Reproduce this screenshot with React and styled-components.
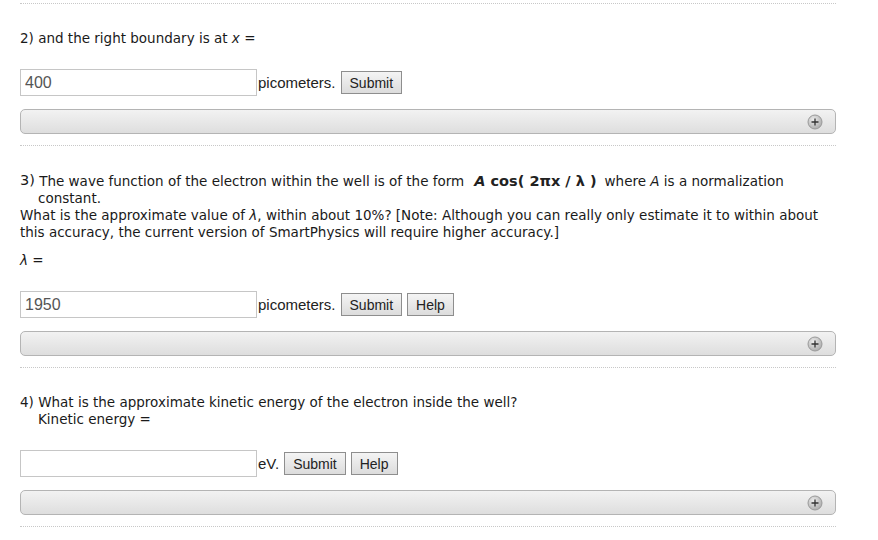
import React from 'react';
import styled, { createGlobalStyle } from 'styled-components';

const Global = createGlobalStyle`
  body {
    margin: 0;
    background: #ffffff;
    font-family: "DejaVu Sans", Verdana, sans-serif;
    color: #1a1a1a;
  }
`;

const Page = styled.div`
  padding: 0 42px 0 20px;
  width: 816px;
`;

const Rule = styled.div`
  border-top: 1px dotted #c8c8c8;
  height: 0;
  margin-top: ${(p) => p.top || 0}px;
`;

const Section = styled.div`
  padding-top: ${(p) => p.top || 26}px;
`;

const Prompt = styled.div`
  font-size: 13.5px;
  line-height: 17px;
`;

const Indent = styled.div`
  padding-left: 18px;
`;

const Num = styled.span`
  font-size: 14.5px;
  vertical-align: 1px;
`;

const Formula = styled.span`
  font-size: 14.5px;
  font-weight: bold;
  margin: 0 8px 0 10px;
  color: #222;
`;

const Var = styled.i`
  font-style: italic;
`;

const Spacer = styled.div`
  height: ${(p) => p.h}px;
`;

const AnswerRow = styled.div`
  display: flex;
  align-items: center;
  margin-top: ${(p) => p.top || 22}px;
  height: 27px;
  font-family: "Liberation Sans", Arial, sans-serif;
`;

const Field = styled.input`
  box-sizing: border-box;
  width: 237px;
  height: 27px;
  border: 1px solid #c6c6c6;
  padding: 0 4px;
  font-family: "Liberation Sans", Arial, sans-serif;
  font-size: 16px;
  color: #555;
  outline: none;
`;

const Unit = styled.span`
  font-size: 15px;
  color: #222;
  margin: 0 5px 0 1px;
`;

const Btn = styled.button`
  box-sizing: border-box;
  height: 23px;
  padding: 0 8px;
  margin-right: 5px;
  border: 1px solid #8e8e8e;
  border-radius: 0;
  background: linear-gradient(#f4f4f4, #dcdcdc);
  font-family: "Liberation Sans", Arial, sans-serif;
  font-size: 14px;
  color: #222;
`;

const Bar = styled.div`
  box-sizing: border-box;
  margin-top: 13px;
  height: 25px;
  border: 1px solid #b4b4b4;
  border-radius: 5px;
  background: linear-gradient(#f2f2f2, #dedede);
  display: flex;
  align-items: center;
  justify-content: flex-end;
  padding-right: 12px;
`;

const Plus = () => (
  <svg width="16" height="16" viewBox="0 0 16 16">
    <defs>
      <radialGradient id="pg" cx="0.4" cy="0.35" r="0.7">
        <stop offset="0" stopColor="#eeeeee" />
        <stop offset="1" stopColor="#a9a9a9" />
      </radialGradient>
    </defs>
    <circle cx="8" cy="8" r="7" fill="url(#pg)" stroke="#9a9a9a" strokeWidth="1" />
    <path d="M8 4.5v7M4.5 8h7" stroke="#333" strokeWidth="1.3" />
  </svg>
);

const Answer = ({ value, unit, help, top }) => (
  <>
    <AnswerRow top={top}>
      <Field defaultValue={value} />
      <Unit>{unit}</Unit>
      <Btn>Submit</Btn>
      {help && <Btn>Help</Btn>}
    </AnswerRow>
    <Bar>
      <Plus />
    </Bar>
    <Rule top={11} />
  </>
);

export default function App() {
  return (
    <Page>
      <Global />
      <Rule top={3} />
      <Section top={26}>
        <Prompt>
          2) and the right boundary is at <Var>x</Var> =
        </Prompt>
        <Answer value="400" unit="picometers." top={22} />
      </Section>
      <Section top={26}>
        <Prompt>
          <Num>3)</Num> The wave function of the electron within the well is of the form
          <Formula>
            <Var>A</Var> cos( 2πx / λ )
          </Formula>
          where <Var>A</Var> is a normalization
          <Indent>constant.</Indent>
          What is the approximate value of <Var>λ</Var>, within about 10%? [Note: Although you can
          really only estimate it to within about
          <br />
          this accuracy, the current version of SmartPhysics will require higher accuracy.]
          <Spacer h={11} />
          <Var>λ</Var> =
        </Prompt>
        <Answer value="1950" unit="picometers." help top={22} />
      </Section>
      <Section top={26}>
        <Prompt>
          4) What is the approximate kinetic energy of the electron inside the well?
          <Indent>Kinetic energy =</Indent>
        </Prompt>
        <Answer value="" unit="eV." help top={22} />
      </Section>
    </Page>
  );
}
